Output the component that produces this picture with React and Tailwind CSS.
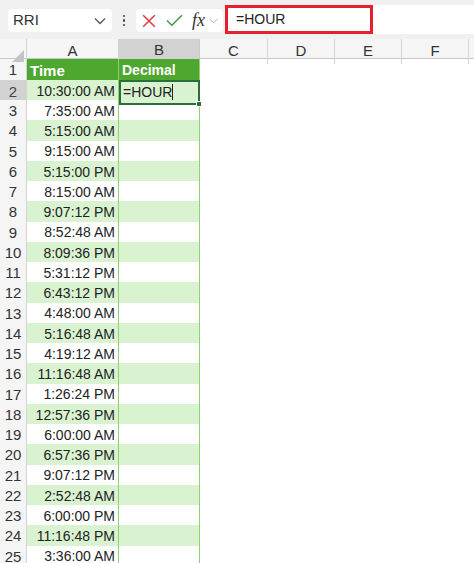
import React from "react";

const times = [
  "10:30:00 AM","7:35:00 AM","5:15:00 AM","9:15:00 AM","5:15:00 PM","8:15:00 AM",
  "9:07:12 PM","8:52:48 AM","8:09:36 PM","5:31:12 PM","6:43:12 PM","4:48:00 AM",
  "5:16:48 AM","4:19:12 AM","11:16:48 AM","1:26:24 PM","12:57:36 PM","6:00:00 AM",
  "6:57:36 PM","9:07:12 PM","2:52:48 AM","6:00:00 PM","11:16:48 PM","3:36:00 AM",
];

const gridCols = "grid grid-cols-[27px_92px_81px_68px_67px_67px_67px_1fr]";

function Chevron({ className }) {
  return (
    <svg className={className} width="12" height="8" viewBox="0 0 12 8" fill="none">
      <path d="M1 1.5 L6 6.5 L11 1.5" stroke="currentColor" strokeWidth="1.3" />
    </svg>
  );
}

export default function App() {
  return (
    <div className="w-[474px] h-[563px] overflow-hidden bg-white text-[#222] font-['Liberation_Sans',Arial,sans-serif]">
      {/* Top bar */}
      <div className="h-[39px] bg-[#f0f0f0] flex items-start">
        <div className="ml-[8px] mt-[9px] w-[104px] h-[23px] bg-white rounded-[4px] flex items-center justify-between pl-[5px] pr-[6px]">
          <span className="text-[15px] text-[#333]">RRI</span>
          <Chevron className="text-[#555]" />
        </div>
        <div className="w-[24px] mt-[9px] h-[23px] flex flex-col items-center justify-center gap-[2px]">
          <span className="w-[2.5px] h-[2.5px] rounded-full bg-[#444]" />
          <span className="w-[2.5px] h-[2.5px] rounded-full bg-[#444]" />
          <span className="w-[2.5px] h-[2.5px] rounded-full bg-[#444]" />
        </div>
        <div className="mt-[9px] w-[87px] h-[23px] bg-white rounded-[4px] flex items-center pl-[6px]">
          <svg width="14" height="14" viewBox="0 0 14 14" fill="none">
            <path d="M1.2 1.2 L12.8 12.8 M12.8 1.2 L1.2 12.8" stroke="#e0363c" strokeWidth="1.5" />
          </svg>
          <svg className="ml-[10px]" width="17" height="13" viewBox="0 0 17 13" fill="none">
            <path d="M1 6.5 L5.8 11.3 L16 1.2" stroke="#3a9a4a" strokeWidth="1.5" />
          </svg>
          <span className="ml-[9px] text-[18px] italic font-['Liberation_Serif',serif] text-[#333] leading-none -mt-[2px]">fx</span>
          <Chevron className="ml-[4px] text-[#aaa] w-[9px]" />
        </div>
        <div className="ml-[2px] mt-[5px] flex-1 h-[29px] bg-white flex items-start">
          <div className="w-[148px] h-[29px] border-[3px] border-[#e5202e] flex items-center pl-[8px]">
            <span className="text-[14px] text-[#222]">=HOUR</span>
          </div>
        </div>
      </div>

      {/* Column headers */}
      <div className={`${gridCols} h-[20px] bg-[#f5f5f5] border-b border-[#c8c8c8] text-[15px] text-[#333]`}>
        <div className="relative border-r border-[#d4d4d4] overflow-hidden">
          <svg className="absolute right-[2px] bottom-[2px]" width="12" height="12" viewBox="0 0 12 12">
            <path d="M12 0 L12 12 L0 12 Z" fill="#c4c4c4" />
          </svg>
        </div>
        <div className="flex items-center justify-center border-r border-[#d4d4d4]">A</div>
        <div className="flex items-center justify-center border-r border-[#c8c8c8] bg-[#d2d2d2] border-b-2 border-b-[#2a7a3c]">B</div>
        <div className="flex items-center justify-center border-r border-[#d4d4d4]">C</div>
        <div className="flex items-center justify-center border-r border-[#d4d4d4]">D</div>
        <div className="flex items-center justify-center border-r border-[#d4d4d4]">E</div>
        <div className="flex items-center justify-center border-r border-[#d4d4d4]">F</div>
        <div />
      </div>

      {/* Row 1 */}
      <div className={`${gridCols} h-[20.8px] text-[14px]`}>
        <div className="flex items-center justify-center bg-[#f5f5f5] border-r border-[#d4d4d4] border-b border-b-[#e1e1e1] text-[#333] text-[15px]">1</div>
        <div className="flex items-center pl-[3px] bg-[#4ea72e] text-white font-bold text-[15px] border-r border-[#8fd16f]">Time</div>
        <div className="flex items-center pl-[3px] bg-[#4ea72e] text-white font-bold border-r border-[#8fd16f]">Decimal</div>
        <div /><div /><div /><div /><div />
      </div>

      {times.map((t, i) => {
        const row = i + 2;
        const green = row % 2 === 0;
        const sel = row === 2;
        return (
          <div key={row} className={`${gridCols} h-[20.25px] text-[14px]`}>
            <div
              className={`flex items-center justify-center text-[15px] border-r border-[#d4d4d4] border-b border-b-[#e1e1e1] ${
                sel ? "bg-[#d2d2d2] text-[#444]" : "bg-[#f5f5f5] text-[#333]"
              }`}
            >
              {row}
            </div>
            <div
              className={`flex items-center justify-end pr-[3px] border-r border-[#8fd16f] border-b border-b-[#b9e3a6] ${
                green ? "bg-[#d9f2d0]" : "bg-white"
              }`}
            >
              {t}
            </div>
            {sel ? (
              <div className="relative bg-[#d9f2d0] border-2 border-[#2a6e3a] flex items-center pl-[2px]">
                <span>=HOUR</span>
                <span className="w-[1px] h-[16px] bg-[#222]" />
                <span className="absolute -right-[4px] -bottom-[4px] w-[6px] h-[6px] bg-[#2a6e3a] border border-white" />
              </div>
            ) : (
              <div
                className={`border-r border-[#8fd16f] border-b border-b-[#b9e3a6] ${
                  green ? "bg-[#d9f2d0]" : "bg-white"
                }`}
              />
            )}
            <div /><div /><div /><div /><div />
          </div>
        );
      })}
    </div>
  );
}
